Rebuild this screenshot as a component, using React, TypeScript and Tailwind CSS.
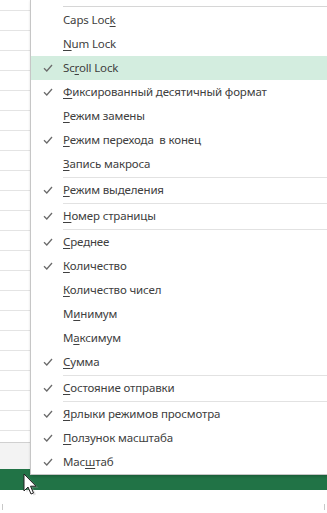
import React from 'react';

type Item = { label: string; key: number; checked?: boolean; active?: boolean } | 'sep';

// key = index of the access-key letter in label
const items: Item[] = [
  { label: 'Caps Lock', key: 8 },
  { label: 'Num Lock', key: 0 },
  { label: 'Scroll Lock', key: 2, checked: true, active: true },
  { label: 'Фиксированный десятичный формат', key: 0, checked: true },
  { label: 'Режим замены', key: 0 },
  { label: 'Режим перехода\u00a0 в конец', key: 0, checked: true },
  { label: 'Запись макроса', key: 0 },
  'sep',
  { label: 'Режим выделения', key: 0, checked: true },
  'sep',
  { label: 'Номер страницы', key: 0, checked: true },
  'sep',
  { label: 'Среднее', key: 0, checked: true },
  { label: 'Количество', key: 0, checked: true },
  { label: 'Количество чисел', key: 0 },
  { label: 'Минимум', key: 1 },
  { label: 'Максимум', key: 1 },
  { label: 'Сумма', key: 0, checked: true },
  'sep',
  { label: 'Состояние отправки', key: 0, checked: true },
  'sep',
  { label: 'Ярлыки режимов просмотра', key: 0, checked: true },
  { label: 'Ползунок масштаба', key: 0, checked: true },
  { label: 'Масштаб', key: 3, checked: true },
];

const Check = () => (
  <svg width="10" height="8" viewBox="0 0 10 8" fill="none">
    <path d="M1 4.2 L3.8 7 L9 1" stroke="#6b6b6b" strokeWidth="1.3" />
  </svg>
);

// 2px tall: 1px gap, 1px line
const Separator = () => (
  <div className="flex h-[2px] flex-col justify-end pl-8">
    <div className="h-px bg-[#e2e2e2]" />
  </div>
);

const MenuRow = ({ label, keyIdx, checked, active }: { label: string; keyIdx: number; checked?: boolean; active?: boolean }) => (
  <div className={`flex h-6 items-center ${active ? 'bg-[#d3eddf]' : ''}`}>
    <div className="flex w-8 justify-center pl-[1px]">{checked && <Check />}</div>
    <span className="whitespace-pre text-[11.5px] leading-none tracking-[-0.15px] text-[#404040]">
      {label.slice(0, keyIdx)}
      <span className="underline underline-offset-2 decoration-[#404040]">{label[keyIdx]}</span>
      {label.slice(keyIdx + 1)}
    </span>
  </div>
);

const Cursor = () => (
  <svg width="16" height="24" viewBox="0 0 16 24" className="absolute left-[23px] top-[473px]">
    <path d="M2 1 L2 18 L6 14 L9 21 L11.5 20 L8.5 13.2 L14 13.2 Z" fill="#aaa" opacity="0.35" transform="translate(1.5 1.5)" />
    <path d="M1 1 L1 18 L5 14 L8 21 L10.5 20 L7.5 13.2 L13 13.2 Z" fill="#fff" stroke="#222" strokeWidth="1" strokeLinejoin="round" />
  </svg>
);

export default function App() {
  const rows = Array.from({ length: 22 });
  return (
    <div className="relative h-[513px] w-[327px] overflow-hidden bg-white" style={{ fontFamily: '"Noto Sans", "Open Sans", sans-serif' }}>
      {/* sheet behind the menu */}
      <div className="flex h-[442px] flex-col">
        <div className="h-[10px] shrink-0" />
        {rows.map((_, i) => (
          <div key={i} className={`h-5 shrink-0 border-t border-[#e4e4e4] ${i === 2 ? 'flex justify-end' : ''}`}>
            {i === 2 && <div className="w-2 bg-[#d9d9d9]" />}
          </div>
        ))}
      </div>
      <div className="h-[27px] border-t border-[#d0d0d0] bg-[#f3f3f3]" />
      <div className="h-[21px] bg-[#217346]" />
      <div className="flex h-[23px] items-end justify-between px-[2px] pb-[3px]">
        <span className="h-[6px] w-px bg-[#c8c8c8]" />
        <span className="h-[6px] w-px bg-[#c8c8c8]" />
      </div>

      {/* context menu */}
      <div className="absolute left-[30px] top-0 flex h-[475px] w-[297px] flex-col border-l border-b border-[#c6c6c6] bg-white shadow-[1px_1px_3px_rgba(0,0,0,0.25)]">
        <div className="h-[6px] shrink-0" />
        <div className="ml-8 h-px shrink-0 bg-[#d6d6d6]" />
        <div className="h-px shrink-0" />
        {items.map((it, i) =>
          it === 'sep' ? (
            <Separator key={i} />
          ) : (
            <MenuRow key={i} label={it.label} keyIdx={it.key} checked={it.checked} active={it.active} />
          )
        )}
      </div>

      <Cursor />
    </div>
  );
}
